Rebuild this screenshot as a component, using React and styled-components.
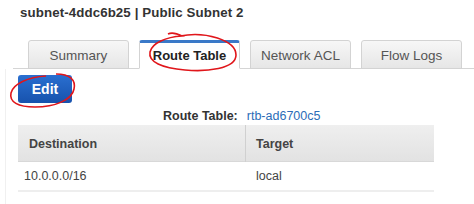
import styled, { createGlobalStyle } from 'styled-components';

const GlobalStyle = createGlobalStyle`
  html, body {
    margin: 0;
    padding: 0;
    background: #fff;
    font-family: "Liberation Sans", Arial, sans-serif;
  }
`;

const Page = styled.div`
  position: relative;
  width: 474px;
  height: 204px;
  overflow: hidden;
  background: #fff;
`;

const Title = styled.div`
  padding: 5px 0 0 20px;
  height: 17px;
  font-size: 13.3px;
  font-weight: bold;
  color: #333;
  letter-spacing: 0.1px;
`;

const TabBar = styled.div`
  display: flex;
  gap: 10px;
  margin: 18px 0 0 13px;
  padding-left: 15px;
  border-bottom: 1px solid #d5d5d5;
  height: 28px;
`;

const Tab = styled.div`
  box-sizing: border-box;
  width: ${p => p.$w}px;
  height: 29px;
  display: flex;
  justify-content: center;
  align-items: center;
  font-size: ${p => (p.$active ? 13 : 13.5)}px;
  font-weight: ${p => (p.$active ? 'bold' : 'normal')};
  color: ${p => (p.$active ? '#222' : '#555')};
  background: ${p => (p.$active ? '#fff' : 'linear-gradient(#f7f7f7, #e6e6e6)')};
  border: 1px solid #d3d3d3;
  border-top: ${p => (p.$active ? '3px solid #3a79c8' : '1px solid #d3d3d3')};
  border-bottom: ${p => (p.$active ? '1px solid #fff' : '1px solid #d3d3d3')};
  border-radius: 3px 3px 0 0;
  padding-top: ${p => (p.$active ? '0' : '2px')};
`;

const Panel = styled.div`
  margin-left: 5px;
  border-left: 1px solid #f0f0f0;
  padding: 6px 0 0 12px;
  height: 130px;
`;

const EditButton = styled.div`
  width: 54px;
  height: 28px;
  display: flex;
  justify-content: center;
  align-items: center;
  color: #fff;
  font-size: 14px;
  font-weight: bold;
  background: linear-gradient(#2a6fd0, #1752ad);
  border-radius: 3px;
`;

const InfoRow = styled.div`
  display: flex;
  gap: 9px;
  margin-top: 6px;
  font-size: 12.5px;
  height: 16px;
  padding-left: 145px;
`;

const Label = styled.span`
  font-weight: bold;
  color: #333;
`;

const Link = styled.span`
  color: #2c6db8;
`;

const Table = styled.div`
  width: 416px;
  display: grid;
  grid-template-columns: 227px 1fr;
`;

const HeadCell = styled.div`
  height: 37px;
  display: flex;
  align-items: center;
  padding-left: ${p => p.$pad}px;
  font-size: 12.5px;
  font-weight: bold;
  color: #444;
  background: linear-gradient(#efefef, #e2e2e2);
  border-left: ${p => (p.$divider ? '1px solid #d0d0d0' : 'none')};
  box-shadow: inset 0 -1px 0 #d8d8d8;
`;

const Cell = styled.div`
  height: 28px;
  display: flex;
  align-items: center;
  padding-left: ${p => p.$pad}px;
  font-size: 12.5px;
  color: #444;
  border-bottom: 2px solid #eeeeee;
`;

const Scribble = styled.svg`
  position: absolute;
  left: 0;
  top: 0;
  pointer-events: none;
`;

export default function App() {
  return (
    <Page>
      <GlobalStyle />
      <Title>subnet-4ddc6b25 | Public Subnet 2</Title>
      <TabBar>
        <Tab $w={101}>Summary</Tab>
        <Tab $w={101} $active>Route Table</Tab>
        <Tab $w={101}>Network ACL</Tab>
        <Tab $w={101}>Flow Logs</Tab>
      </TabBar>
      <Panel>
        <EditButton>Edit</EditButton>
        <InfoRow>
          <Label>Route Table:</Label>
          <Link>rtb-ad6700c5</Link>
        </InfoRow>
        <Table>
          <HeadCell $pad={11}>Destination</HeadCell>
          <HeadCell $pad={10} $divider>Target</HeadCell>
          <Cell $pad={6}>10.0.0.0/16</Cell>
          <Cell $pad={11}>local</Cell>
        </Table>
      </Panel>
      <Scribble width="474" height="204" viewBox="0 0 474 204">
        <path
          d="M180 36 C205 31 236 40 236 55 C236 69 206 72 185 70 C162 68 148 62 150 52 C152 43 166 37 182 36 C176 33 172 32 168 34"
          fill="none"
          stroke="#e0161b"
          strokeWidth="1.6"
        />
        <path
          d="M56 74 C70 74 76 80 74 89 C72 100 55 107 35 107 C18 107 9 102 11 93 C13 84 28 77 46 76"
          fill="none"
          stroke="#e0161b"
          strokeWidth="1.6"
        />
      </Scribble>
    </Page>
  );
}
